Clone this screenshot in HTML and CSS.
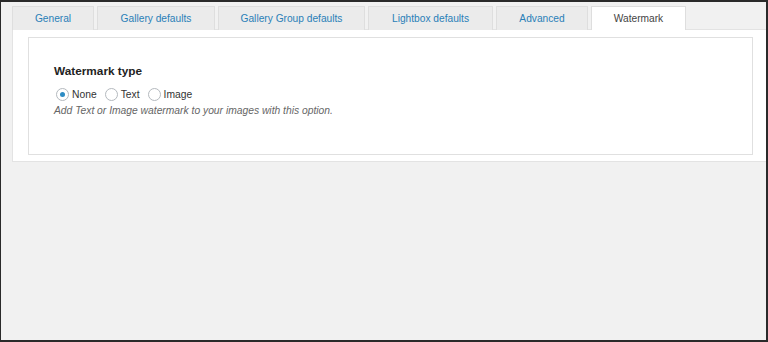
FILE: index.html
```html
<!DOCTYPE html>
<html lang="en">
<head>
  <meta charset="UTF-8" />
  <title>Watermark settings</title>
  <link rel="stylesheet" href="styles.css">
</head>
<body>
  <div class="frame">
    <!-- tabs -->
    <div class="tabs">
      <a class="tab" href="#">General</a>
      <a class="tab" href="#">Gallery defaults</a>
      <a class="tab" href="#">Gallery Group defaults</a>
      <a class="tab" href="#">Lightbox defaults</a>
      <a class="tab" href="#">Advanced</a>
      <a class="tab active" href="#">Watermark</a>
    </div>

    <div class="panel">
      <div class="box">
        <div class="field-title">Watermark type</div>
        <div class="radios">
          <label class="radio"><span class="dot checked"></span>None</label>
          <label class="radio"><span class="dot"></span>Text</label>
          <label class="radio"><span class="dot"></span>Image</label>
        </div>
        <p class="desc">Add Text or Image watermark to your images with this option.</p>
      </div>
    </div>
  </div>
</body>
</html>
```

FILE: styles.css
```css
html, body {
  margin: 0;
  padding: 0;
}
body {
  font-family: "Liberation Sans", Arial, sans-serif;
  background: #1f1f1f;
}
.frame {
  box-sizing: border-box;
  width: 768px;
  height: 342px;
  background: #f1f1f1;
  border: 2px solid #2a2a2a;
  border-left-width: 1px;
  padding: 4px 0 0 11px;
}
.tabs {
  display: flex;
  gap: 3px;
  height: 23px;
}
.tab {
  display: flex;
  align-items: center;
  justify-content: center;
  box-sizing: border-box;
  height: 24px;
  background: #ebebeb;
  border: 1px solid #dedede;
  border-bottom: none;
  color: #2a7fb8;
  font-size: 10.2px;
  text-decoration: none;
}
.tab:nth-child(1) { width: 82px; }
.tab:nth-child(2) { width: 118px; }
.tab:nth-child(3) { width: 147px; }
.tab:nth-child(4) { width: 125px; }
.tab:nth-child(5) { width: 92px; }
.tab:nth-child(6) { width: 95px; }
.tab.active {
  background: #fff;
  color: #444;
  position: relative;
  z-index: 1;
}
.panel {
  background: #fff;
  border: 1px solid #e3e3e3;
  border-right: none;
  padding: 7px 13px 6px 15px;
}
.box {
  border: 1px solid #e0e0e0;
  height: 90px;
  padding: 26px 25px 0;
}
.field-title {
  font-size: 11.8px;
  font-weight: bold;
  color: #222;
}
.radios {
  display: flex;
  gap: 8px;
  margin: 10px 0 0 2px;
}
.radio {
  display: flex;
  align-items: center;
  gap: 3px;
  font-size: 10.3px;
  color: #333;
}
.dot {
  box-sizing: border-box;
  width: 13px;
  height: 13px;
  border: 1px solid #b4b9be;
  border-radius: 50%;
  background: #fff;
  display: flex;
  align-items: center;
  justify-content: center;
}
.dot.checked::after {
  content: "";
  width: 5px;
  height: 5px;
  border-radius: 50%;
  background: #2d8cc4;
}
.desc {
  margin: 4px 0 0;
  font-size: 10.3px;
  font-style: italic;
  color: #666;
}
```
